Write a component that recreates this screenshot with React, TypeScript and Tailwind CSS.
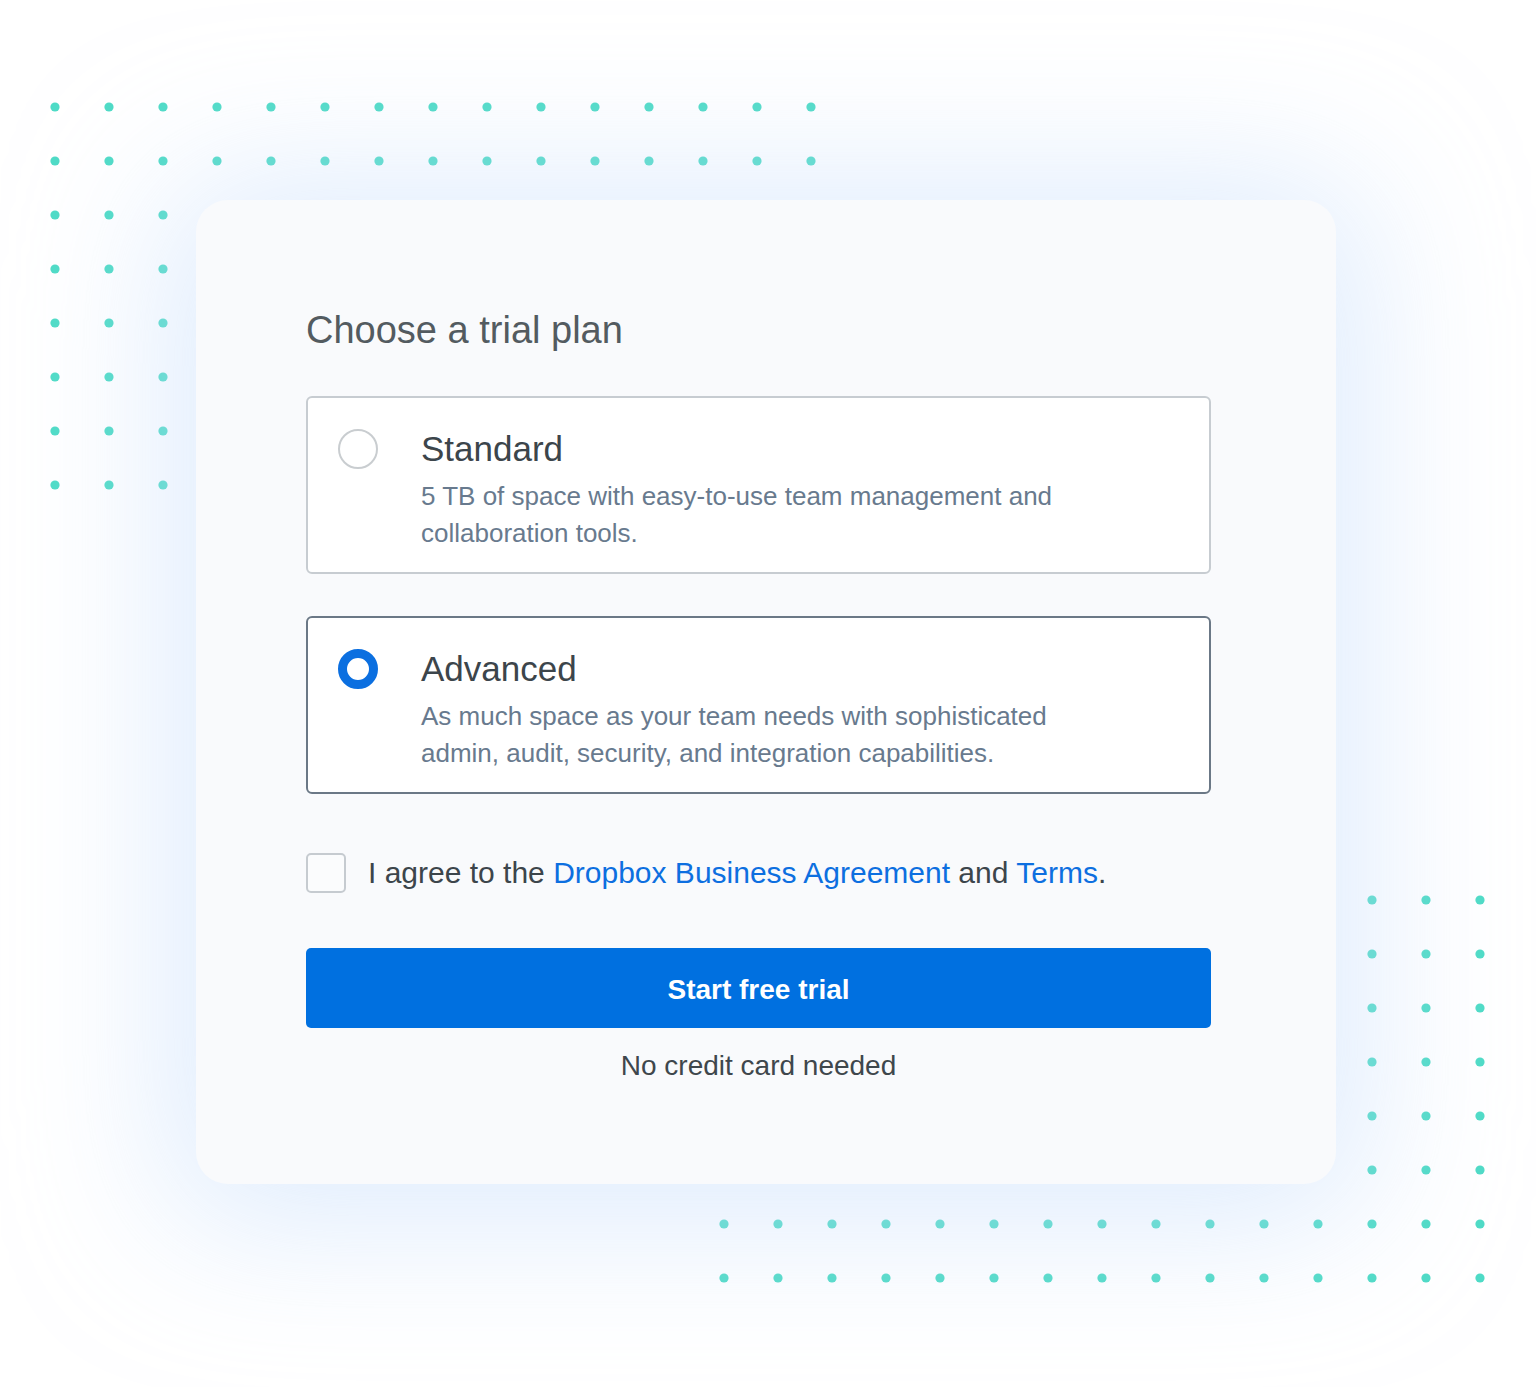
import React from "react";

const font = { fontFamily: '"Liberation Sans", Arial, sans-serif' };

function DotGrid({ cols, rows, className }: { cols: number; rows: number; className: string }) {
  const gap = 54;
  return (
    <svg
      className={className}
      width={(cols - 1) * gap + 10}
      height={(rows - 1) * gap + 10}
      viewBox={`0 0 ${(cols - 1) * gap + 10} ${(rows - 1) * gap + 10}`}
    >
      {Array.from({ length: rows }).flatMap((_, r) =>
        Array.from({ length: cols }).map((__, c) => (
          <circle key={`${r}-${c}`} cx={5 + c * gap} cy={5 + r * gap} r={4.6} fill="#4edbc6" />
        ))
      )}
    </svg>
  );
}

function PlanOption({
  title,
  lines,
  selected,
}: {
  title: string;
  lines: string[];
  selected?: boolean;
}) {
  return (
    <div
      className={`flex gap-[43px] rounded-md border-2 bg-white pl-[30px] pt-[30px] pb-[20px] ${
        selected ? "border-[#6b7886]" : "border-[#c7ccd1]"
      }`}
    >
      {selected ? (
        <div className="mt-[1px] h-[40px] w-[40px] shrink-0 rounded-full border-[9px] border-[#0b6fe0] bg-white" />
      ) : (
        <div className="mt-[1px] h-[40px] w-[40px] shrink-0 rounded-full border-2 border-[#c9cdd0] bg-white" />
      )}
      <div>
        <div className="text-[35px] leading-[42px] text-[#3c454b]">{title}</div>
        <div className="mt-[8px] text-[26px] leading-[37px] text-[#687a8e]">
          {lines.map((l) => (
            <div key={l}>{l}</div>
          ))}
        </div>
      </div>
    </div>
  );
}

export default function App() {
  return (
    <div className="relative h-[1387px] w-[1536px] overflow-hidden bg-white" style={font}>
      <DotGrid cols={15} rows={2} className="absolute left-[50px] top-[102px]" />
      <DotGrid cols={3} rows={6} className="absolute left-[50px] top-[210px]" />
      <DotGrid cols={3} rows={6} className="absolute left-[1367px] top-[895px]" />
      <DotGrid cols={15} rows={2} className="absolute left-[719px] top-[1219px]" />

      <div className="pl-[196px] pt-[200px]">
        <div className="relative h-[984px] w-[1140px] rounded-[32px] bg-[#f9fafc] pl-[110px] pt-[107px] shadow-[0_10px_150px_30px_rgba(196,220,252,0.55)]">
          <div className="w-[905px]">
            <h1 className="text-[38px] leading-[46px] text-[#535b60]">Choose a trial plan</h1>

            <div className="mt-[43px]">
              <PlanOption
                title="Standard"
                lines={["5 TB of space with easy-to-use team management and", "collaboration tools."]}
              />
            </div>
            <div className="mt-[42px]">
              <PlanOption
                selected
                title="Advanced"
                lines={[
                  "As much space as your team needs with sophisticated",
                  "admin, audit, security, and integration capabilities.",
                ]}
              />
            </div>

            <div className="mt-[59px] flex items-center gap-[22px]">
              <div className="h-[40px] w-[40px] shrink-0 rounded-[5px] border-2 border-[#c6cbd0] bg-[#fbfcfd]" />
              <div className="text-[30px] leading-[40px] text-[#3c454b]">
                I agree to the <span className="text-[#0d6fe0]">Dropbox Business Agreement</span> and{" "}
                <span className="text-[#0d6fe0]">Terms</span>.
              </div>
            </div>

            <button className="mt-[55px] flex h-[80px] w-full items-center justify-center rounded-[5px] bg-[#0070e0] pt-[3px] text-[28px] font-bold text-white">
              Start free trial
            </button>

            <div className="mt-[21px] text-center text-[28px] leading-[34px] text-[#3f474c]">
              No credit card needed
            </div>
          </div>
        </div>
      </div>
    </div>
  );
}
